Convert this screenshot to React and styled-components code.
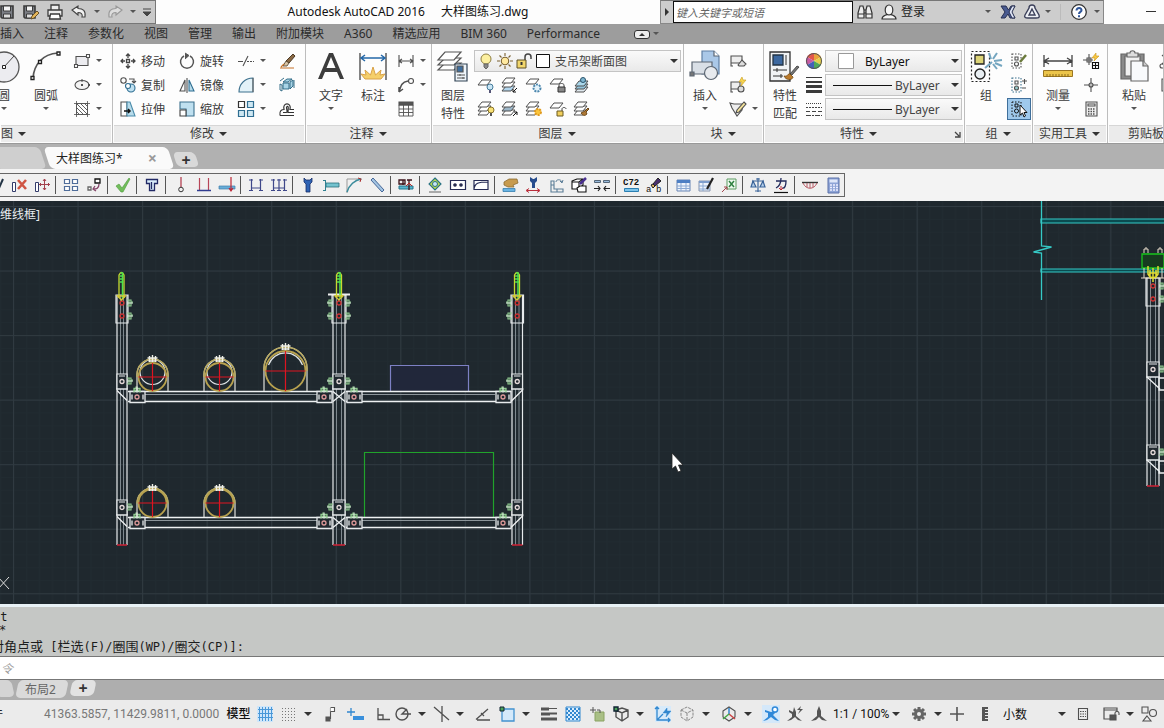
import React from "react";
import styled, { createGlobalStyle, css } from "styled-components";

const Global = createGlobalStyle`
  *, *::before, *::after { box-sizing: border-box; }
  body {
    margin: 0;
    overflow-x: hidden;
    font: 12px/18px "Noto Sans", "Noto Sans CJK SC", sans-serif;
    color: #3a3a3a;
  }
  button, input, select { font: inherit; color: inherit; }
`;

/* ---------- icons ---------- */

const line = { fill: "none", stroke: "#505050", strokeWidth: 1.1 };
const sheet = (y, fill = "#fff", x = 0) => (
  <path d={`M${x + 4} ${y}h9l-4 5H${x}z`} fill={fill} stroke="#505050" />
);
const gearTeeth = [0, 45, 90, 135].map((a) => (
  <path key={a} d="M8 1v14" stroke="#666" strokeWidth="3" transform={`rotate(${a} 8 8)`} />
));

const icons = {
  save: <g fill="none" stroke="#3b3b3b" strokeWidth="1.600"><path d="M2 2h12v12H3l-1-1z" fill="#7c7f86" /><path d="M4.500 2v5h7V2z" fill="#f4f4f4" strokeWidth="1" /><path d="M4.500 14v-4h7v4z" fill="#ddd" strokeWidth="1" /></g>,
  saveAs: <g fill="none" stroke="#3b3b3b" strokeWidth="1.600"><path d="M1 2h11v12H2l-1-1z" fill="#7c7f86" /><path d="M3.500 2v5h6V2z" fill="#f4f4f4" strokeWidth="1" /><path d="M3.500 14v-4h6v4z" fill="#ddd" strokeWidth="1" /><path d="M8 15l1-3 5-5 2 2-5 5z" fill="#e5b65a" stroke="#6b5328" strokeWidth="1" /></g>,
  print: <g fill="#eee" stroke="#3b3b3b" strokeWidth="1.300"><path d="M4 6V1h8v5" /><path d="M1 6h14v6H1z" /><path d="M3.500 10h9l1 5h-11z" fill="#fff" /></g>,
  undo: <path d="M1 6l6-4v2.500c5 0 8 2 7 8.500h-3c1-3-1-4.500-4-4.500V11z" fill="#f1f1f1" stroke="#444" strokeWidth="1.100" />,
  redo: <path d="M15 6L9 2v2.500C4 4.500 1 6.500 2 13h3c-1-3 1-4.500 4-4.500V11z" fill="#ddd" stroke="#999" strokeWidth="1.100" />,
  customize: <path d="M4 5h8M4 8h8l-4 4z" fill="#444" stroke="#444" />,
  binoculars: <g fill="#eee" stroke="#333" strokeWidth="1.200"><path d="M3 2h3l1 4v8H1V9zM13 2h-3L9 6v8h6V9z" /><path d="M7 6h2M7 9h2M1 10h6M9 10h6" /></g>,
  user: <g fill="#f5f5f5" stroke="#333" strokeWidth="1.200"><path d="M1 15c0-3 2-3 5-4.500h4c3 1.500 5 1.500 5 4.500z" /><ellipse cx="8" cy="6" rx="3.800" ry="5" /></g>,
  exchange: <g stroke="#283052" strokeWidth="1"><path d="M1 2h5l2.500 4L11 2h4l-4 6 4 6h-5l-2-4-3 4H1l4-6z" fill="#4a5b91" /><path d="M9 8l3-6h3l-3 6 3 6h-3z" fill="#dfe5f5" /></g>,
  a360: <g fill="#eef0f5" stroke="#3c405a" strokeWidth="1.400"><path d="M8 1c2 0 3 1 3 3l4 7c1 3-1 3-3 3H4c-3 0-4-1-3-3l4-7c0-2 1-3 3-3z" /><path d="M8 5l3 6H5z" /></g>,
  help: <g><circle cx="8" cy="8" r="7.300" fill="#fff" stroke="#333" strokeWidth="1.300" /><path d="M5.500 6.500C5.500 3 11 3.500 10.500 6.500 10.300 8 8 8 8 10M8 11.200v2" fill="none" stroke="#31579a" strokeWidth="2" /></g>,
  minimize: <path d="M3 8.500h10" stroke="#333" />,

  circle: <g><circle cx="16" cy="17" r="15" fill="#ececf0" stroke="#555" strokeWidth="1.300" /><path d="M16 17L26 6" stroke="#444" /><path d="M14.500 15.500h3v3h-3z" fill="#fff" stroke="#222" /></g>,
  arc: <g fill="#fff" stroke="#555" strokeWidth="1.300"><path d="M3 28C4 15 12 4 28 3" fill="none" strokeWidth="1.700" /><path d="M1 26.500h3v3H1zM8.500 10.500h3v3h-3zM27 2h3v3h-3z" stroke="#222" /></g>,
  rect: <g {...line}><path d="M2 3.500h12v9H2z" fill="#ececf0" /><path d="M.5 11.500h3v3h-3zM12.500 1.500h3v3h-3z" fill="#fff" /></g>,
  ellipse: <g {...line}><ellipse cx="8" cy="8" rx="7" ry="4.500" fill="#f4f4f4" /><path d="M7 8h2M8 7v2M7 3.500h2M14 8h2" strokeWidth="2" /></g>,
  hatch: <g {...line}><path d="M2.500 2.500h11v11h-11zM0 2.500h16M0 13.500h16M2.500 0v16M13.500 0v16" strokeWidth=".8" /><path d="M3 3l10 10M7 3l6 6M3 7l6 6M11 3l2 2M3 11l2 2" strokeWidth=".9" /></g>,
  move: <g fill="none" stroke="#444" strokeWidth="1.300"><path d="M6.500 6.500h3v3h-3z" /><path d="M8 1v4M8 11v4M1 8h4M11 8h4M6 3l2-2 2 2M6 13l2 2 2-2M3 6L1 8l2 2M13 6l2 2-2 2" /></g>,
  copy: <g {...line}><circle cx="3.500" cy="3.500" r="2.700" /><path d="M9 2h5v3M12 4l2 2 2-2" /><circle cx="11" cy="11" r="4" fill="#bfe0f0" stroke="#2f6e92" /><circle cx="8" cy="9" r="2.500" fill="#fff" stroke="#2f6e92" /></g>,
  stretch: <g {...line}><path d="M1 1h6v14H1z" /><path d="M7 1h3l5 14H7z" fill="#b7dbea" stroke="#4b8cab" /><path d="M4 10h6M8 8l2 2-2 2" stroke="#111" strokeWidth="1.500" /></g>,
  rotate: <g fill="none" stroke="#555" strokeWidth="1.500"><path d="M11 3a6.500 6.500 0 1 1-6 0" /><path d="M6 0l4 2.500L6 6" fill="#555" strokeWidth="1" /></g>,
  mirror: <g {...line}><path d="M6 3v11H1z" /><path d="M10 3v11h5z" fill="#b7dbea" stroke="#2f6e92" /><path d="M8 1v15" /></g>,
  scale: <g {...line} stroke="#3d718e"><path d="M1 1h14v14H7V8H1z" fill="#bfe0f0" /><path d="M1 9h6v6H1z" fill="#fff" stroke="#444" /></g>,
  trim: <g {...line}><path d="M0 8.500h5M5 13l5-10" /><path d="M9 8.500h7" strokeDasharray="2 1" /></g>,
  fillet: <g {...line} stroke="#3d718e"><path d="M1 15C1 7 7 1 15 1v14z" fill="#e3f2f8" /><path d="M15 1v14" stroke="#666" /></g>,
  array: <g fill="#cfe8f3" stroke="#2f6e92" strokeWidth="1.200"><path d="M.5.5h6v6h-6z" fill="#fff" stroke="#333" /><path d="M9.500.5h6v6h-6zM.5 9.500h6v6h-6zM9.500 9.500h6v6h-6z" /></g>,
  erase: <g><path d="M14 1l2 2-6 7-3-2z" fill="#8b6a45" stroke="#4b3a26" /><path d="M7 8l3 2-2 3H4z" fill="#d8c4a4" stroke="#4b3a26" strokeWidth=".8" /><path d="M1 15h14M2 14l3-3" stroke="#c67026" strokeWidth="1.200" /></g>,
  explode: <g fill="#a9d4e6" stroke="#25627f" strokeWidth=".9"><path d="M4 5l4-3h5L9 5zM4 6h6v6H4zM11 5l3-2v6l-3 3z" /><path d="M1 7l2 1v6l-2-1zM1 4l4-3M15 3v8" fill="none" /></g>,
  offset: <g fill="none" stroke="#333" strokeWidth="1.200"><path d="M1 14.500h14M15 11.500H8.500M1 14.500c-1-5 2-6 4-6C3 1 13 1 11 8.500h4" /><path d="M4 11.500h3c3 0-1-5 1-6s1 3 1 6" /></g>,
  text: <path d="M3 29L14 3h4l11 26h-4l-3-7H10l-3 7zM11.500 18h9L16 7z" fill="#3d3d3d" />,
  dimension: <g fill="none"><path d="M3 3v27M29 3v27" stroke="#444" strokeWidth="1.300" /><path d="M4 8h24M8 5L4 8l4 3M24 5l4 3-4 3" stroke="#2468a8" strokeWidth="1.500" /><path d="M16 17l2.500 8L24 20l-1 5 5-1-4 5H8l-4-5 5 1-1-5 5.500 5z" fill="#f5cf6a" stroke="#d9a248" /></g>,
  linear: <g {...line}><path d="M1 2v12M15 2v12M1 8h14M4 6L1 8l3 2M12 6l3 2-3 2" /></g>,
  leader: <g {...line}><path d="M1 15C3 8 4 5 10 4M1 15l-0-5M1 15l4-3" strokeWidth="1.500" /><circle cx="13" cy="4" r="2.500" /></g>,
  table: <g {...line}><path d="M1 1h14v3H1z" fill="#555" /><path d="M1 4h14v11H1zM1 8h14M1 11.500h14M5.500 4v11M10.500 4v11" strokeWidth=".9" /></g>,
  layers: <g fill="#fff" stroke="#555" strokeWidth="1.200"><path d="M8 13h16l-7 7H1z" /><path d="M8 8h16l-7 7H1z" /><path d="M8 2h16l-7 8H1z" /><path d="M18 14h12v17H18z" fill="#eef5fb" stroke="#345" /><path d="M20 16h6v6h-6z" fill="#3f6f9f" /><path d="M20 25h8M20 28h8M23 24v2M26 27v2" strokeWidth="1" /></g>,
  bulb: <g><circle cx="8" cy="6" r="5" fill="#fcf0a0" stroke="#8f7f42" /><path d="M6 11h4v3l-2 2-2-2z" fill="#888" stroke="#666" /></g>,
  sun: <g fill="#ffe9a0" stroke="#7b6130" strokeWidth="1.100"><circle cx="8" cy="8" r="3.700" /><path d="M8 0v3M8 13v3M0 8h3M13 8h3M2.500 2.500l2 2M11.500 11.500l2 2M13.500 2.500l-2 2M4.500 11.500l-2 2" /></g>,
  unlock: <g><path d="M9 8V4c0-4 6-4 6 0v2" fill="none" stroke="#444" strokeWidth="1.500" /><path d="M1 7h9v8H1z" fill="#f1d66c" stroke="#5e5126" /><path d="M5.500 9v3" stroke="#333" strokeWidth="2" /></g>,
  swatch: <path d="M1.500 1.500h13v13h-13z" fill="#fff" stroke="#111" />,
  grey: <path d="M.5.5h15v15h-15z" fill="#fff" stroke="#999" />,
  layOff: <g>{sheet(3)}<circle cx="12" cy="10" r="3" fill="#c9e6f5" stroke="#457a9a" /><path d="M11 13h2v3h-2z" fill="#557" /></g>,
  layIso: <g>{sheet(9, "#b2d6ee")}{sheet(5)}{sheet(1)}<path d="M15 11l-4 4M11 12v3h3" stroke="#111" fill="none" /></g>,
  layFreeze: <g>{sheet(2)}<circle cx="11" cy="11" r="3.500" fill="#e4f3fb" stroke="#4b86ad" strokeWidth="2" strokeDasharray="2 1" /></g>,
  layLock: <g>{sheet(2)}<path d="M9 10V8c0-2 5-2 5 0v2" fill="none" stroke="#444" /><path d="M8 10h7v5H8z" fill="#888" stroke="#333" /></g>,
  layCurrent: <g>{sheet(10, "#dfe8ee", 1)}{sheet(7, "#92c4dc", 1)}{sheet(4, "#a8d6ea", 1)}<circle cx="9" cy="3" r="2.500" fill="#7fb6d0" stroke="#29536b" /></g>,
  layOn: <g>{sheet(9)}{sheet(5)}{sheet(1)}<circle cx="13" cy="9" r="3" fill="#f8e176" stroke="#8a7428" /><path d="M12 12h2v3h-2z" fill="#555" /></g>,
  layUniso: <g>{sheet(9)}{sheet(5, "#9db7c9")}{sheet(1)}<path d="M11 15l4-4M12 11h3v3" stroke="#111" fill="none" /></g>,
  layThaw: <g>{sheet(9)}{sheet(5)}{sheet(1)}<circle cx="12" cy="11" r="3" fill="#fbc53c" stroke="#e09a1e" strokeWidth="2" strokeDasharray="2 1" /></g>,
  layUnlock: <g>{sheet(2)}<path d="M12 10V8c0-2 4-2 4 0" fill="none" stroke="#444" /><path d="M7 10h6v5H7z" fill="#f1cf5c" stroke="#6b5a22" /></g>,
  layMatch: <g>{sheet(9)}{sheet(5)}{sheet(1)}<path d="M15 8l-3 3 1 2c-2 2-4 2-6-1l4-2 3-3z" fill="#b07a35" stroke="#694516" /></g>,
  insert: <g stroke="#5c6672" strokeWidth="1.200"><path d="M13 1h12l5 5v18H13z" fill="#aac8e8" stroke="#5f7fa3" /><path d="M25 1v5h5" fill="#fff" /><path d="M3 12h20v12H3z" fill="#d9dfe6" /><circle cx="22" cy="23" r="6.500" fill="#e7eaee" /><path d="M1 22h4v4H1z" fill="#777" /></g>,
  blockCreate: <g {...line}><path d="M1 3h11v7H1zM1 10v3h2" fill="#eee" /><path d="M8 12l4-5 4 4-2 2H9z" fill="#ddd" /></g>,
  blockEdit: <g {...line}><path d="M1 5h9v7H1zM1 12v3h2" fill="#eee" /><circle cx="11" cy="12" r="3" fill="#ddd" /><path d="M12 0L9 5h3l-1 4 5-6h-3z" fill="#f7d550" stroke="#c79c1d" strokeWidth=".6" /></g>,
  blockAttr: <g {...line}><path d="M0 2l4 1 9 0-1 6-5 6-5-8z" fill="#eee" /><path d="M14 1l2 2-7 8-3 1 1-3z" fill="#f5e39a" /></g>,
  matchProps: <g stroke="#333" strokeWidth="1.300"><path d="M1 2h20v29H1z" fill="#f1f3f5" /><path d="M4 5h10v10H4z" fill="#3c68a0" stroke="#234" /><path d="M17 5v10M4 20h14M8 18v4M4 26h10M12 24v4" strokeWidth="1" /><path d="M30 17l-7 8-2-1 7-8z" fill="#777" strokeWidth=".8" /><path d="M15 26c4 1 4-3 6-2l3 3c0 3-7 4-9-1z" fill="#bb7b2c" stroke="#704612" strokeWidth=".8" /></g>,
  colors: <g><path d="M8 8V0a8 8 0 0 1 7 4z" fill="#e9a33c" /><path d="M8 8V0a8 8 0 0 0-7 4z" fill="#e2574c" /><path d="M8 8l7-4a8 8 0 0 1 0 8z" fill="#e6cf4a" /><path d="M8 8L1 4a8 8 0 0 0 0 8z" fill="#c75aa3" /><path d="M8 8l7 4a8 8 0 0 1-7 4z" fill="#4fa85a" /><path d="M8 8l-7 4a8 8 0 0 0 7 4z" fill="#4560b8" /><circle cx="8" cy="8" r="7.500" fill="none" stroke="#555" /></g>,
  weights: <g fill="#3b3b3b"><path d="M0 0h16v1H0zM0 4h16v2H0zM0 8h16v3H0zM0 13h16v3H0z" /></g>,
  linetypes: <g stroke="#444" fill="none"><path d="M0 2.500h16" strokeDasharray="1 1" /><path d="M0 6.500h16" strokeDasharray="2 1" /><path d="M0 10.500h16" strokeDasharray="4 2" /><path d="M0 14.500h16" strokeDasharray="5 1 2 1" /></g>,
  group: <g fill="none" stroke="#222"><path d="M1.500 1.500h18v30h-18z" strokeDasharray="2 2" strokeWidth="1.200" /><path d="M5 5h9v9H5z" fill="#ddd477" strokeWidth="1.300" /><circle cx="10" cy="24" r="5" fill="#e8eef2" strokeWidth="1.400" /><path d="M22 12l-7 6M23 14l4 5M21 9l-2-6M24 11l8-1M23 9l4-6M25 13l7 3" stroke="#74a6c0" strokeWidth="2" /></g>,
  ungroup: <g {...line}><path d="M1 1h9v14H1z" strokeDasharray="1.500 1.500" /><path d="M4 4h3v3H4z" /><circle cx="5.500" cy="11" r="2" /><path d="M15 2l-6 7" stroke="#6b7a3c" strokeWidth="2.500" /></g>,
  groupEdit: <g {...line}><path d="M1 1h9v14H1z" strokeDasharray="1.500 1.500" stroke="#3f7390" /><path d="M4 4h3v3H4z" /><circle cx="5.500" cy="11" r="2" fill="#9cc" /><path d="M11 4h5M13.500 2v5M11 11h4" /></g>,
  groupSelect: <g {...line} stroke="#111" strokeWidth="1"><path d="M1 1h9v14H1z" strokeDasharray="1.500 1.500" /><path d="M4 3h3v3H4z" /><circle cx="5.500" cy="10" r="2" /><path d="M9 4v10l2.500-2 1.500 4 1.500-1-1.500-3.500h3z" fill="#fff" /></g>,
  measure: <g><path d="M2 5v12M30 5v12M2 11h28M7 8l-5 3 5 3M25 8l5 3-5 3" fill="none" stroke="#444" strokeWidth="1.300" /><path d="M1.500 20.500h29v6h-29z" fill="#ecc54b" stroke="#9b7621" /><path d="M5 24v3M8 24v3M11 24v3M14 24v3M17 24v3M20 24v3M23 24v3M26 24v3" stroke="#8b6a1b" /></g>,
  quickSelect: <g {...line}><path d="M0 7h10M6 1v11M4 5h4v4H4z" /><path d="M13 0l-4 5h3l-1 3 5-5h-3z" fill="#f7c843" stroke="#c9961d" strokeWidth=".6" /><path d="M9.500 9.500h6v6h-6zM9 12.500h6M12.500 10v6" stroke="#111" /></g>,
  idPoint: <g {...line}><path d="M1 8h14M8 1v14" /><circle cx="8" cy="8" r="2" fill="#bbb" /></g>,
  calculator: <g {...line}><path d="M3 1h11v14H3zM5 3h7v2H5z" fill="#f1f1f1" /><path d="M5 8h7M5 10.500h7M5 13h7" strokeDasharray="1.500 1" strokeWidth="1.500" /></g>,
  paste: <g stroke="#666" strokeWidth="1.200"><path d="M3 4h23v25H3z" fill="#8a8a8a" /><path d="M7 6h15v20H7z" fill="#f1f1f1" /><path d="M9 3h3c0-3 5-3 5 0h3v4H9z" fill="#ddd" /><path d="M13 11h12l5 5v15H13z" fill="#f8fafc" /><path d="M25 11v5h5" fill="#ccc" /></g>,
  cut: <g {...line}><path d="M2 2l9 9M11 2l-9 9" /><circle cx="2" cy="13" r="2" /></g>,
  copyClip: <g {...line}><path d="M2 2h9v12H2z" fill="#eee" /></g>,

  check: <path d="M1 9l3-2 3 4 7-10 1 1-7 13H6z" fill="#71bd5b" stroke="#4e9a3c" strokeWidth=".6" />,
  edit: <path d="M15 2l-4 9" stroke="#234" strokeWidth="2" fill="none" />,
  delCol: <g><path d="M1.500 5.500h3v9h-3z" fill="#fff" stroke="#333c6b" /><path d="M7 3l8 9M15 3l-8 9" stroke="#cf5543" strokeWidth="2.600" /></g>,
  moveCol: <g><path d="M1.500 5.500h3v9h-3z" fill="#fff" stroke="#333c6b" /><path d="M10.500 2v11M5 7.500h11M9 4l1.500-2L12 4M9 11l1.500 2 1.500-2M7 6L5.500 7.500 7 9M14 6l1.500 1.500L14 9" fill="none" stroke="#a3404c" /></g>,
  quad: <g fill="#fff" stroke="#4f6d9a"><path d="M1.500 2.500h5v4h-5zM9.500 2.500h5v4h-5zM1.500 9.500h5v4h-5zM9.500 9.500h5v4h-5z" strokeWidth="1.200" /></g>,
  swap: <g fill="#fff" stroke="#111" strokeWidth="1.300"><path d="M9 2h5v4H9z" /><path d="M2 10h3v3H2z" stroke="#666" /><path d="M13 7c0 5-3 5-6 5M9 9l-2 3 3 2" fill="none" stroke="#84456a" /></g>,
  tee: <path d="M2.500 2.500h11v4h-3v7h-5v-7h-3zM7.500 5v7" fill="#d9edfb" stroke="#222a66" strokeWidth="1.300" />,
  pendulum: <g fill="none"><path d="M8 0v10" stroke="#b03345" strokeWidth="1.200" /><circle cx="8" cy="12.500" r="2.300" stroke="#333" /></g>,
  goal: <g fill="none"><path d="M3.500 1v12M12.500 1v12" stroke="#b84558" strokeWidth="1.200" /><path d="M1 13.500h14" stroke="#313d90" strokeWidth="1.500" /></g>,
  railDown: <g><path d="M0 9h16v3H0z" fill="#67acd8" stroke="#3f7fae" strokeWidth=".7" /><path d="M12 0v14M10 11l2 3 2-3" stroke="#bd2634" strokeWidth="1.200" fill="none" /></g>,
  bay2: <path d="M3.500 2v12M12.500 2v12M3 11h10M1 3h4M11 3h4M1 13.500h4M11 13.500h4" stroke="#3f488a" strokeWidth="1.200" fill="none" />,
  bay3: <path d="M2.500 2v12M8 2v12M13.500 2v12M2 11h12M0 3h4M6 3h4M12 3h4M0 13.500h4M6 13.500h4M12 13.500h4" stroke="#3f488a" strokeWidth="1.200" fill="none" />,
  bolt: <path d="M4 1l2 2h4l2-2v4l-2 2v8H6V7L4 5z" fill="#2e63b4" stroke="#162f68" strokeWidth=".8" />,
  railSide: <g><path d="M3 6h13v4H3z" fill="#74c3cf" stroke="#28707c" strokeWidth=".8" /><path d="M2.500 3v11M0 3.500h3M0 13.500h3" stroke="#2f8090" /></g>,
  braceDown: <g fill="none"><path d="M1 2v14M1 2h15" stroke="#999" /><path d="M1 15C3 8 9 3 15 2" stroke="#3b8c9c" strokeWidth="1.600" /><path d="M12 1l3 1-1 3" stroke="#a33" /></g>,
  diagonal: <path d="M2 3l2-2 11 12-2 2z" fill="#a3c4e2" stroke="#456798" />,
  assembly: <g><path d="M1 9h14v3H1z" fill="#58b3cd" stroke="#23768c" /><path d="M1 3h6v4H1zM9 3h5M11 3v10M5 3v5" fill="none" stroke="#3b1118" strokeWidth="1.300" /><path d="M11 6l3 3M11 6l-3 3" stroke="#b22" /></g>,
  target: <g><path d="M8 1l6 6-6 6-6-6z" fill="#b8d94d" stroke="#267083" strokeWidth="1.100" /><circle cx="8" cy="7" r="2.500" fill="#c8e6f5" stroke="#267083" /><path d="M2 14h12v2H2z" fill="#aaa" /></g>,
  plate: <g fill="#fff" stroke="#252a54" strokeWidth="1.200"><path d="M.5 3.500h15v9H.5z" /><circle cx="5" cy="8" r="1.200" fill="#333" /><circle cx="11" cy="8" r="1.200" fill="#333" /></g>,
  curvePlate: <path d="M1 3.500h14v9H1zM1 12c1-6 4-7 14-7" fill="#fff" stroke="#252a54" strokeWidth="1.200" />,
  hand: <g><path d="M2 5l5-3h8l1 4-5 2 1 2H6L2 8z" fill="#c79b4f" stroke="#8b6c34" strokeWidth=".8" /><path d="M1 11.500h12v3H1z" fill="#69b4e4" stroke="#367fae" strokeWidth=".8" /></g>,
  boltWidth: <g><path d="M5 0v4l2 2v5h3V6l2-2V0L9 2H8z" fill="#264c8d" /><path d="M2 13.500h12M4 11.500l-3 2 3 2M12 11.500l3 2-3 2" stroke="#ba2e3b" fill="none" /></g>,
  elbow: <g fill="none" stroke="#5a7c96"><path d="M3 4h3v8h9v3H3zM3 8h3M9 12v3" strokeWidth="1.100" /><path d="M8 5c0-3 5-3 6 0M12 4l2 2 1-3" /></g>,
  boxes: <g fill="#fff" stroke="#111" strokeWidth="1.100"><path d="M1 4l5-2h6v6l-4 4H1zM1 5h7v7M8 5l4-3" /><path d="M6 11l3-2h6v6H7z" /><path d="M15 1L9 7" stroke="#4a3090" strokeWidth="2.500" /></g>,
  joinRails: <g fill="none" stroke="#222"><path d="M.5 3.500h6v2h-6zM9.500 3.500h6v2h-6z" fill="#9bd" stroke="#567" /><path d="M0 11.500h6M4 9l2 2.500L4 14M16 11.500h-6M12 9l-2 2.500 2 2.500" strokeWidth="1.200" /></g>,
  eraser: <g><path d="M12 1l3 3-6 5-2-2z" fill="#493071" stroke="#222" /><path d="M5 8l2-1 2 2-2 2z" fill="#e3b45d" stroke="#222" /><text x="0" y="15" fontSize="9" fontFamily="Liberation Mono" fill="#111">a</text><text x="10" y="15" fontSize="9" fontFamily="Liberation Mono" fill="#111">b</text></g>,
  c72: <g><text x="0" y="8" fontSize="9" fontFamily="Liberation Mono" fontWeight="700" fill="#111">C72</text><path d="M1.500 11.500h14v3h-14z" fill="#7cc3ea" stroke="#2b7fb2" /></g>,
  grid: <g><path d="M2 3h13v11H2z" fill="#eef4fc" stroke="#6783b3" /><path d="M2 3h13v3H2z" fill="#4d7fc4" /><path d="M2 9h13M2 11.500h13M6 6v8M11 6v8" stroke="#8aa9d4" /></g>,
  gridEdit: <g><path d="M1 4h11v10H1z" fill="#eef4fc" stroke="#8594ae" /><path d="M1 4h11v2H1z" fill="#7d9dcc" /><path d="M1 9h11M1 12h11M5 6v8" stroke="#8aa9d4" /><path d="M15 1L9 12" stroke="#222" strokeWidth="2.200" /></g>,
  excel: <g><path d="M6 2h9v10H6z" fill="#eef8ee" stroke="#5d9c62" /><path d="M8 4l5 6M13 4l-5 6" stroke="#2f8040" strokeWidth="1.500" /><path d="M1 15l5-5M3 10h3v3" fill="none" stroke="#a2454c" /></g>,
  balance: <path d="M8 1v14M2 4h12M3 4L1 10h5zM13 4l-3 6h5zM5 14h6M6 2h4" fill="#b5cfea" stroke="#3b6499" strokeWidth="1.200" />,
  force: <g fill="none"><path d="M3 4h10c0 4-1 8-4 7M8 1c0 4-1 8-5 10" stroke="#222a5c" strokeWidth="1.300" /><path d="M8 9v4M6 11l2 2 2-2" stroke="#ba2633" /><path d="M1 15.500h14" stroke="#111" strokeWidth="1.200" /></g>,
  beam: <g fill="none"><path d="M0 5.500h16" stroke="#333" strokeWidth="1.400" /><path d="M1 6c3 7 11 7 14 0M5 6v4M8 6v5M11 6v4" stroke="#b34a55" strokeWidth=".9" /></g>,
  calc: <g><path d="M3 1h11v15H3z" fill="#8ea4d6" stroke="#5a70a8" /><path d="M4.500 2.500h8v3h-8z" fill="#dfe7f8" /><path d="M5 8h8M5 10.500h8M5 13h8" stroke="#eef" strokeWidth="1.500" strokeDasharray="2 1" /></g>,

  gridOn: <g><path d="M0 0h16v16H0z" fill="#cfe6fa" /><path d="M2.500 1v14M5.500 1v14M8.500 1v14M11.500 1v14M14.500 1v14M1 3.500h15M1 7.500h15M1 11.500h15" stroke="#4a98d8" strokeWidth="1" /></g>,
  dots: <path d="M1 2.500h14M1 5.500h14M1 8.500h14M1 11.500h14M1 14.500h14" stroke="#777" strokeDasharray="1 2" />,
  infer: <g {...line} stroke="#555"><path d="M7.500 13V2" /><path d="M7.500 1.500h4v4h-4" fill="#fff" /><path d="M3 11h4v4H3z" fill="#555" /></g>,
  dynInput: <g><path d="M4 2v8M0 6h8" stroke="#3187cf" strokeWidth="1.300" /><path d="M6 10h11v4H6z" fill="#3a90dc" /></g>,
  ortho: <g {...line} strokeWidth="1.300"><path d="M3 2v11.500h12M3 9h5v5" /></g>,
  polar: <g {...line} strokeWidth="1.400"><circle cx="7" cy="8" r="6" /><path d="M16 8H7l5-5" /></g>,
  isodraft: <g {...line} strokeWidth="1.300"><path d="M1 1l15 13M9 0v16" /></g>,
  otrack: <g {...line} strokeWidth="1.300"><path d="M1 13.500L13 3M2 14h13" /><path d="M6 7l3 3" /></g>,
  osnap: <g><path d="M3 3h12v12H3z" fill="#d4e9fa" stroke="#4292d0" strokeWidth="1.300" /><path d="M1 1h4v4H1z" fill="#4ba35a" stroke="#123" /></g>,
  lwt: <g stroke="#555"><path d="M0 3h8M0 8h9" strokeWidth="3" /><path d="M8 2.500h8" /><path d="M9 7.500h7" strokeWidth="2" /><path d="M0 13h16" strokeWidth="3" /></g>,
  transparency: <g><path d="M1 1h14v14H1z" fill="#dceefc" stroke="#3187cf" /><path d="M1 3h14M1 7h14M1 11h14" stroke="#3187cf" strokeWidth="2" strokeDasharray="2 2" /><path d="M3 5h12M3 9h12M3 13h12" stroke="#3187cf" strokeWidth="2" strokeDasharray="2 2" /></g>,
  cycling: <g><path d="M6 6h9v9H6z" fill="#a9bf86" stroke="#8aa363" /><path d="M4 1v6M1 4h6M8 4h3v3" fill="none" stroke="#555" /></g>,
  cube: <g {...line} strokeWidth="1.400"><path d="M3 4l6-2 6 2v7l-6 4-6-4zM3 4l6 3 6-3M9 7v8" /><path d="M1 1h4v4H1z" fill="#4ba35a" stroke="#123" /></g>,
  ducs: <g fill="none" stroke="#3187cf" strokeWidth="1.300"><path d="M0 0h16v16H0z" fill="#d7eafa" stroke="none" /><path d="M2 1v13h13M0 3l2-2 2 2M13 12l2 2-2 2M2 14L8 8" /><path d="M12 2L8 7h4l-1 4 5-6h-4z" fill="#3187cf" strokeWidth=".5" /></g>,
  filter: <g fill="none" stroke="#888"><path d="M2 4l6-3 6 3v7l-6 4-6-4zM2 4l6 3 6-3M8 7v8" strokeDasharray="3 1" /></g>,
  gizmo: <g {...line}><path d="M2 5l6-4 6 4v6l-6 4-6-4z" /><path d="M8 8V2" stroke="#3187cf" strokeWidth="1.500" /><path d="M8 8l6 5" stroke="#c44" strokeWidth="1.500" /><path d="M8 8l-6 5" stroke="#4a4" strokeWidth="1.500" /></g>,
  annoVis: <g><path d="M-1 -1h18v18H-1z" fill="#d4e8fa" /><path d="M0 15l5-4V7l-3-1V4l6 2 4-1 1 1-3 3 6 6-4-1-4-3-4 3z" fill="#2f88d8" /><circle cx="12" cy="3.500" r="2.600" fill="#fff" stroke="#2f88d8" strokeWidth="1.500" /></g>,
  annoAuto: <g fill="#555"><path d="M0 15l5-4V8L2 6V4l4 2 1-5 2 5v4l6 5-4-1-3-3-4 3z" /><path d="M14 0l-4 4h3l-2 4 5-5h-3z" /></g>,
  annoScale: <path d="M0 15l6-5V5l2-5 2 5v5l6 5-5-1-3-3-3 3z" fill="#555" />,
  gear: <g>{gearTeeth}<circle cx="8" cy="8" r="5" fill="#666" /><circle cx="8" cy="8" r="2" fill="#eee" /></g>,
  plus: <path d="M8 1v14M1 8h14" stroke="#555" strokeWidth="1.600" />,
  ruler: <path d="M5 1h6v2H8v1h3v2H8v1h3v2H8v1h3v2H8v1h3v2H5z" fill="#555" />,
  panel: <g {...line}><path d="M3.500 2.500h9v11h-9z" /><path d="M5 5.500h6M5 8h6M5 10.500h6" strokeDasharray="1.500 1" /></g>,
  lockUi: <g {...line}><path d="M8 13H1V2h13v4M1 4h13" strokeWidth="1.200" /><path d="M7 9h6v5H7z" fill="#555" /><path d="M12 9V7c0-2 4-2 4 0v2" /></g>,
  isolate: <g {...line}><path d="M1 1h6v6H1z" /><circle cx="12" cy="7" r="3.500" /><path d="M6 10l4 5H2z" /></g>,
};

const Svg = styled.svg`
  display: block;
  flex: none;
  overflow: visible;
`;
const Icon = ({ name, size = 16 }) => (
  <Svg width={size} height={size} viewBox={size > 16 ? "0 0 32 32" : "0 0 16 16"} aria-hidden="true">
    {icons[name]}
  </Svg>
);

const Caret = styled.i`
  display: block;
  flex: none;
  width: ${(p) => p.$w || 18}px;
  height: 8px;
  &::before {
    content: "";
    display: block;
    width: 0;
    margin: 2px auto;
    border: ${(p) => (p.$big ? 4 : 3)}px solid transparent;
    border-top-color: ${(p) => (p.$big ? "#333" : "#555")};
    border-bottom: 0;
    transform: rotate(${(p) => (p.$right ? -90 : 0)}deg);
  }
`;

/* ---------- shared pieces ---------- */

const bare = css`
  border: 0;
  padding: 0;
  margin: 0;
  background: none;
`;
const Page = styled.div`
  display: flex;
  flex-direction: column;
  min-height: 100vh;
  overflow: hidden;
`;

/* ---------- title bar ---------- */

const TitleBar = styled.header`
  display: flex;
  height: 24px;
  background: #fdfdfd;
`;
const QuickAccess = styled.div`
  display: flex;
  align-items: center;
  width: 156px;
  padding-right: 4px;
  background: #c9c9c9;
  border: solid #777;
  border-width: 1px 1px 1px 0;
  & > :first-child { margin-left: -5px; }
`;
const BarButton = styled.button`
  ${bare}
  display: flex;
  align-items: center;
  justify-content: center;
  flex: none;
  height: 22px;
  width: ${(p) => p.$w || 24}px;
`;
const Caption = styled.h1`
  display: flex;
  flex: 1;
  justify-content: center;
  gap: 16px;
  margin: 0;
  font-size: 12px;
  font-weight: 400;
  line-height: 24px;
  color: #111;
  white-space: nowrap;
`;
const InfoCenter = styled.div`
  display: flex;
  align-items: center;
  width: 444px;
  background: #cdcdcd;
  border: 1px solid #888;
  border-top-color: #777;
`;
const SearchInput = styled.input`
  width: 180px;
  height: 22px;
  padding: 0 2px;
  border: 1px solid #111;
  border-radius: 0;
  background: #fff;
  font-size: 11px;
  &::placeholder { color: #666; font-style: italic; opacity: 1; }
`;
const SignIn = styled.button`
  ${bare}
  display: flex;
  align-items: center;
  flex: 1;
  white-space: nowrap;
  color: #222;
  & > i { margin-left: auto; }
`;
const Divider = styled.span`
  width: 1px;
  height: 16px;
  margin: 0 6px;
  background: #bbb;
`;
const WindowControls = styled.div`
  width: 60px;
  padding-left: 35px;
`;

/* ---------- ribbon ---------- */

const TabList = styled.nav`
  display: flex;
  align-items: center;
  gap: 20px;
  height: 20px;
  background: #9d9d9d;
`;
const Tab = styled.a`
  flex: none;
  line-height: 22px;
  color: #2b2b2b;
  text-decoration: none;
`;
const CollapseButton = styled.button`
  ${bare}
  display: flex;
  align-items: center;
  margin-left: 14px;
`;
const CollapsePill = styled.span`
  display: flex;
  justify-content: center;
  align-items: center;
  width: 16px;
  height: 9px;
  border: 1px solid #333;
  border-radius: 3px;
  background: #eee;
  &::before {
    content: "";
    border: 3px solid transparent;
    border-bottom-color: #333;
    border-top: 0;
  }
`;
const Ribbon = styled.div`
  display: flex;
  height: 100px;
  background: #fdfdfd;
  border-bottom: 1px solid #999;
`;
const Panel = styled.section`
  display: flex;
  flex-direction: column;
  flex: ${(p) => (p.$w ? `0 0 ${p.$w}px` : "1 0 0")};
  min-width: 0;
  border-right: 1px solid #bdbdbd;
  overflow: hidden;
`;
const PanelBody = styled.div`
  display: flex;
  flex: 1;
  padding: 5px 2px 0 ${(p) => p.$pad || 0}px;
`;
const PanelTitle = styled.h2`
  display: flex;
  align-items: center;
  justify-content: ${(p) => (p.$start === undefined ? "center" : "flex-start")};
  padding-left: ${(p) => (p.$start === undefined ? 4 : p.$start)}px;
  height: 17px;
  margin: 0 1px 1px;
  background: #ebebeb;
  border-top: 1px solid #d6d6d6;
  font-size: 12px;
  font-weight: 400;
  white-space: nowrap;
  & > svg { margin-left: auto; }
`;
const Spring = styled.span`
  flex: 1;
`;
const BigButton = styled.button`
  ${bare}
  display: flex;
  flex-direction: column;
  align-items: center;
  flex: none;
  width: ${(p) => p.$w || 42}px;
  margin-left: ${(p) => (p.$clipped ? -14 : 0)}px;
  padding-top: 1px;
  line-height: 18px;
  & > svg { margin-bottom: 5px; }
`;
const ToolGrid = styled.div`
  display: grid;
  grid-template-columns: ${(p) => p.$cols || "auto"};
  grid-auto-rows: 24px;
  align-content: start;
  justify-content: start;
  flex: none;
  margin-left: ${(p) => (p.$spaced ? 4 : 0)}px;
`;
const ToolButton = styled.button`
  ${bare}
  display: flex;
  align-items: center;
  justify-content: ${(p) => (p.$wide ? "center" : "flex-start")};
  width: ${(p) => (p.$wide ? "24px" : "auto")};
  height: ${(p) => (p.$active ? 22 : 24)}px;
  align-self: center;
  white-space: nowrap;
  ${(p) => p.$active && css`
    background: #9fc9ec;
    outline: 1px solid #3f6f9b;
    outline-offset: -1px;
  `}
`;
const ToolLabel = styled.span`
  margin-left: 5px;
  padding-top: 2px;
`;
const LayerColumn = styled.div`
  flex: 1;
  min-width: 0;
`;
const Field = styled.label`
  display: flex;
  align-items: center;
  height: 22px;
  margin: 1px 0;
  padding-left: ${(p) => p.$pad || 3}px;
  border: 1px solid #c4c4c4;
  background: linear-gradient(#fafafa, #e9e9e9);
  position: relative;
  & > i { position: absolute; right: 0; pointer-events: none; }
`;
const FieldIcons = styled.span`
  display: flex;
  gap: 3px;
`;
const Select = styled.select`
  ${bare}
  appearance: none;
  flex: 1;
  min-width: 0;
  height: 20px;
  padding-left: ${(p) => p.$pad || 0}px;
  padding-top: 1px;
  color: ${(p) => (p.$strong ? "#111" : "#444")};
`;
const LineSample = styled.span`
  flex: none;
  width: 59px;
  height: 1px;
  margin-right: 3px;
  background: #111;
`;
const FieldStack = styled.div`
  flex: 1;
  display: flex;
  flex-direction: column;
  margin-left: 3px;
`;

const Small = ({ icon, label, caret, wide, active }) => (
  <ToolButton type="button" $wide={wide} $active={active} aria-label={label ? undefined : icon}>
    <Icon name={icon} />
    {label && <ToolLabel>{label}</ToolLabel>}
    {caret && <Caret />}
  </ToolButton>
);
const Big = ({ icon, lines, caret, w, clipped }) => (
  <BigButton type="button" $w={w} $clipped={clipped}>
    <Icon name={icon} size={32} />
    {lines.map((l) => <span key={l}>{l}</span>)}
    {caret && <Caret />}
  </BigButton>
);

/* ---------- file tabs and tool strip ---------- */

const FileTabs = styled.nav`
  display: flex;
  align-items: flex-end;
  height: 25px;
  background: #b1b1b1;
`;
const FileTab = styled.div`
  position: relative;
  isolation: isolate;
  display: flex;
  align-items: center;
  flex: none;
  width: ${(p) => p.$w}px;
  height: ${(p) => p.$h || 22}px;
  padding-left: ${(p) => p.$pad || 0}px;
  margin-left: ${(p) => p.$gap || 0}px;
  margin-bottom: ${(p) => p.$lift || 0}px;
  color: #222;
  &::before {
    content: "";
    position: absolute;
    inset: 0 ${(p) => (p.$tight ? 1 : 3)}px;
    z-index: -1;
    background: ${(p) => p.$bg || "#fafafa"};
    border-radius: 5px;
    transform: skewX(${(p) => p.$skew || 0}deg);
  }
`;
const TabLink = styled.a`
  padding-top: 1px;
  color: ${(p) => (p.$dim ? "#666" : "#222")};
  text-decoration: none;
  white-space: nowrap;
`;
const CloseButton = styled.button`
  ${bare}
  margin-left: auto;
  margin-right: 15px;
  color: #999;
  font-size: 16px;
  font-weight: 700;
  line-height: 18px;
`;
const AddButton = styled.button`
  ${bare}
  width: 100%;
  color: #333;
  font-size: 16px;
  font-weight: 700;
  line-height: 14px;
`;
const StripHolder = styled.div`
  display: flex;
  height: 32px;
  padding: 4px 0;
  background: #f3f3f3;
`;
const Strip = styled.div`
  display: flex;
  align-items: center;
  height: 24px;
  border: solid #666;
  border-width: 1px 1px 1px 0;
  background: #f0f0f0;
  & > :first-child { margin-left: -16px; }
`;
const StripButton = styled.button`
  ${bare}
  display: grid;
  place-items: center;
  flex: none;
  width: 23px;
  height: 22px;
`;
const StripRule = styled.span`
  flex: none;
  width: 2px;
  height: 18px;
  margin: 0 2px;
  background: #555;
  border-right: 1px solid #f0f0f0;
`;

/* ---------- drawing area ---------- */

const Canvas = styled.main`
  position: relative;
  flex: 1 0 403px;
  overflow: hidden;
  background: #1f282e;
  & > svg { position: absolute; inset: 0; width: 100%; height: 100%; }
`;
const ViewLabel = styled.span`
  position: relative;
  z-index: 1;
  display: block;
  padding-top: 5px;
  color: #e8ecee;
`;

const Nut = ({ x, y, flip }) => (
  <g transform={`translate(${x} ${y})${flip ? " rotate(-90)" : ""}`} fill="none">
    <path d="M-1 -3h4v6h-4M3 -1h2M1 -3v6" stroke="#8fc98f" />
    <path d="M-1 0h6" stroke="#cfe8cf" />
  </g>
);
const Hole = ({ x, y, color = "#d99" }) => <circle cx={x} cy={y} r="2" fill="none" stroke={color} strokeWidth="1.300" />;

const Column = ({ x, w, top = 295, bottom = 545, sides, brackets = [374, 500] }) => {
  const c = x + w / 2;
  return (
    <g fill="none" stroke="#e6eaec" strokeWidth="1.200">
      <path d={`M${x} ${top}V${bottom}M${x + w} ${top}V${bottom}`} />
      <path d={`M${x + 3.5} ${top}V${bottom}M${x + w - 3.5} ${top}V${bottom}`} stroke="#7f898f" strokeWidth="1" />
      <path d={`M${x - 1} ${top}h${w + 2}v28h-${w + 2}z`} />
      <Hole x={c} y={top + 8} color="#c33" />
      <Hole x={c} y={top + 21} color="#c33" />
      {brackets.map((b) => (
        <g key={b}>
          <path d={`M${x} ${b}h${w}v15h-${w}z`} fill="#20292f" />
          <path d={`M${x + 2} ${b + 2}h${w - 4}M${x - 1} ${b + 15}h${w + 2}`} />
          <Hole x={c} y={b + 7.500} color="#e8dcdc" />
        </g>
      ))}
      {sides.map((s) => (
        <g key={s} transform={s < 0 ? `translate(${2 * c} 0) scale(-1 1)` : undefined}>
          {[top + 8, top + 21, ...brackets.map((b) => b + 7)].map((y) => <Nut key={y} x={x + w + 1} y={y} />)}
        </g>
      ))}
      <path d={`M${x} ${bottom}h${w}`} stroke="#d02034" strokeWidth="1.500" />
    </g>
  );
};
const Hanger = ({ x }) => (
  <g fill="none" strokeWidth="1.300">
    <path d={`M${x - 2.500} 298V275q2.500 -5 5 0V298`} stroke="#c9d930" />
    <path d={`M${x - 1} 273h2v26M${x - 2} 276h4M${x - 2} 279h4M${x - 2} 282h4`} stroke="#4de04d" strokeWidth="1.500" />
    <path d={`M${x - 4} 296l4 4 4-4z`} stroke="#d6c936" />
  </g>
);
const Clamp = ({ x, y }) => (
  <g fill="none" stroke="#e6eaec">
    <path d={`M${x - 7} ${y}h15v11h-15z`} fill="#20292f" />
    <path d={`M${x - 5} ${y + 3}v5M${x + 6} ${y + 3}v5`} />
    <Hole x={x} y={y + 5.500} />
    <Nut x={x} y={y} flip />
  </g>
);
const Beam = ({ y }) => (
  <g fill="none" stroke="#eef1f2" strokeWidth="1.300">
    <path d={`M128 ${y}H332M128 ${y + 10}H332M346 ${y}H511M346 ${y + 10}H511`} />
    <path d={`M145 ${y + 3}H317M361 ${y + 3}H495`} stroke="#8d969b" strokeWidth="1" />
    <path d={`M117 ${y - 1}l10 10M523 ${y - 2}l-12 12M333 ${y}l12 10M345 ${y}l-12 10`} />
    {[137, 324, 354, 503].map((x) => <Clamp key={x} x={x} y={y} />)}
  </g>
);
const Pipe = ({ x, y, r, base, inner }) => {
  const o = r + 1.500;
  const top = base - 2 * r - (inner ? 4 : 1);
  return (
    <g fill="none">
      <path d={`M${x - o} ${base}V${top + o}a${o} ${o} 0 0 1 ${2 * o} 0V${base}`} stroke="#dfe2dc" strokeWidth="1.200" />
      {inner > 2 && <circle cx={x} cy={y - inner} r={r - 1.500} stroke="#dfe4e6" strokeWidth="1.200" />}
      {inner <= 2 && <path d={`M${x - r + 3} ${y - 6}a${r - 2} ${r - 2} 0 0 1 ${2 * r - 6} 0`} stroke="#dfe4e6" strokeWidth="1.200" />}
      <path d={`M${x - o} ${y}V${top + o}a${o} ${o} 0 0 1 ${2 * o} 0V${y}`} stroke="#b9a95e" strokeWidth="1.500" />
      <circle cx={x} cy={y} r={r} stroke="#b8a24f" strokeWidth="1.800" />
      <path d={`M${x - r} ${y}h${2 * r}M${x} ${y - r}v${2 * r}`} stroke="#dd1420" strokeWidth="1.200" />
      <path d={`M${x - 5} ${top - 1}h10M${x - 4} ${top + 2}h8M${x - 3} ${top - 3}v6M${x} ${top - 4}v7M${x + 3} ${top - 3}v6`} stroke="#f0f0e6" strokeWidth="1.400" />
    </g>
  );
};
const SideFrame = () => (
  <g fill="none">
    <path d="M1041 219H4000V223H1041zM1041 269H4000V272H1041z" fill="#0b4b50" stroke="#35c9c6" strokeWidth="1.200" />
    <path d="M1041.500 201v45l10 1-18 5 8 1v47" stroke="#35c9c6" strokeWidth="1.300" />
    <g transform="translate(1147 0)">
      <Column x={0} w={12} top={278} bottom={486} sides={[1]} brackets={[362, 445]} />
      {[377, 460].map((y) => <path key={y} d={`M0 ${y}l13 12M12 ${y + 1}h9v12h-9z`} stroke="#eef1f2" strokeWidth="1.300" />)}
      <path d="M-5 254h22v14h-22z" fill="#173b20" stroke="#18c51c" strokeWidth="1.300" />
      <path d="M-3 253v-4h4v4M-2 248h2M11 253v-4h4v4M12 248h2M-6 278h24M-3 268v10M15 268v10" stroke="#e8dccb" />
      <path d="M1 266v8q5 8 10 0v-8M3 270v8M9 270v8M2 273h8M6 268v14" stroke="#e0dc35" strokeWidth="1.500" />
    </g>
  </g>
);

const Drawing = () => (
  <svg aria-hidden="true">
    <defs>
      <pattern id="minor" x="13" y="5" width="12.900" height="12.900" patternUnits="userSpaceOnUse">
        <path d="M.5 0V13M0 .5H13" stroke="#212b31" fill="none" />
      </pattern>
      <pattern id="major" x="13" y="5" width="64.550" height="64.550" patternUnits="userSpaceOnUse">
        <path d="M.5 0V65M0 .5H65" stroke="#303a41" fill="none" />
      </pattern>
    </defs>
    <rect width="100%" height="100%" fill="url(#minor)" />
    <rect width="100%" height="100%" fill="url(#major)" />
    <g transform="translate(0 -201)">
      <path d="M390.500 391V365.500h78V391" fill="#21273a" stroke="#7d80c4" strokeWidth="1.200" />
      <path d="M364.500 517V452.500h129V517" fill="none" stroke="#21a32b" strokeWidth="1.200" />
      <Column x={117} w={10} sides={[1]} />
      <Column x={333} w={12} sides={[-1, 1]} />
      <Column x={512} w={10.500} sides={[-1]} />
      <path d="M328 294.500h22" stroke="#eee" strokeWidth="2" />
      <Beam y={391.500} />
      <Beam y={517.500} />
      <Hanger x={121.500} />
      <Hanger x={339} />
      <Hanger x={517} />
      <Pipe x={152.500} y={377} r={14} base={391} inner={5} />
      <Pipe x={219.500} y={377} r={14} base={391} inner={5} />
      <Pipe x={285.500} y={371} r={20} base={391} inner={2} />
      <Pipe x={152.500} y={503} r={14} base={517} />
      <Pipe x={219.500} y={503} r={14} base={517} />
      <SideFrame />
      <path d="M-2 577l11 12M9 577l-11 12" stroke="#ddd" />
      <path d="M672 453v16l3.500-3 2.500 6 3-1-2.500-6h4.500z" fill="#fff" stroke="#222" strokeWidth=".8" />
    </g>
  </svg>
);

/* ---------- command area, layout tabs, status bar ---------- */

const History = styled.div`
  height: 52px;
  padding-top: 4px;
  border-top: 3px solid #e8f1f5;
  background: #c5c7c5;
  color: #1c1c1c;
  font-family: "DejaVu Sans Mono", "Noto Sans CJK SC", monospace;
`;
const HistoryLine = styled.p`
  display: flex;
  margin: 0;
  font-size: 12px;
  line-height: ${(p) => p.$h || 13}px;
  white-space: pre;
  margin-left: ${(p) => p.$shift}px;
`;
const Hanzi = styled.span`
  font-size: 13px;
`;
const CommandInput = styled.input`
  display: block;
  width: 100%;
  height: 24px;
  padding: 0 1px;
  border: solid #777;
  border-width: 1px 0;
  border-radius: 0;
  background: #fff;
  &::placeholder { color: #999; font-style: italic; opacity: 1; }
`;
const LayoutTabs = styled(FileTabs)`
  height: 20px;
  align-items: flex-start;
  background: #aeaeae;
`;
const StatusBar = styled.footer`
  display: flex;
  align-items: center;
  height: 28px;
  background: #ebebeb;
  white-space: nowrap;
  overflow: hidden;
  color: #222;
`;
const Sliver = styled.span`
  flex: none;
  width: 44px;
  margin-left: -9px;
  margin-right: 9px;
`;
const Coordinates = styled.span`
  flex: none;
  width: 182px;
  color: #777;
  font-family: Roboto, sans-serif;
`;
const ModelButton = styled.button`
  ${bare}
  flex: none;
  width: 25px;
  color: #111;
  font-weight: 500;
`;
const StatusButton = styled.button`
  ${bare}
  display: grid;
  place-items: center;
  flex: none;
  width: ${(p) => p.$w || 20}px;
  height: 24px;
  margin-left: ${(p) => p.$gap}px;
`;
const ScaleButton = styled.button`
  ${bare}
  flex: none;
  width: 54px;
  margin-left: 4px;
  color: #111;
  font-family: Roboto, sans-serif;
  text-align: left;
`;
const UnitField = styled.label`
  position: relative;
  display: flex;
  align-items: center;
  width: 66px;
  margin-left: 8px;
  & > i { position: absolute; right: 0; pointer-events: none; }
`;

const tabs = ["插入", "注释", "参数化", "视图", "管理", "输出", "附加模块", "A360", "精选应用", "BIM 360", "Performance"];

const strip = [
  ["edit", "delCol", "moveCol"], ["quad", "swap"], ["check"], ["tee"], ["pendulum", "goal", "railDown"],
  ["bay2", "bay3"], ["bolt", "railSide", "braceDown", "diagonal"], ["assembly"], ["target", "plate", "curvePlate"],
  ["hand", "boltWidth", "elbow", "boxes", "joinRails"], ["c72", "eraser"], ["grid", "gridEdit", "excel"],
  ["balance", "force"], ["beam", "calc"],
];

const statusLeft = [
  ["gridOn"], ["dots"], ["caret"], ["infer"], ["dynInput"], ["ortho", 8], ["polar", 0], ["caret"], ["isodraft", 0],
  ["caret"], ["otrack"], ["osnap"], ["caret"], ["lwt"], ["transparency"], ["cycling"], ["cube"], ["caret"],
  ["ducs"], ["filter"], ["caret"], ["gizmo"], ["caret"], ["annoVis"], ["annoAuto"], ["annoScale"],
];

const StatusItem = ({ name, gap = 4 }) =>
  name === "caret" ? (
    <StatusButton type="button" $w={18} $gap={0} aria-label="更多"><Caret $big /></StatusButton>
  ) : (
    <StatusButton type="button" $gap={gap} aria-label={name}><Icon name={name} /></StatusButton>
  );

const Bar = ({ name, w, right }) => (
  <BarButton type="button" $w={w} aria-label={name || "更多"}>
    {name ? <Icon name={name} /> : <Caret $w={12} $right={right} $big={right} />}
  </BarButton>
);

export default function App() {
  return (
    <Page>
      <Global />
      <TitleBar>
        <QuickAccess>
          <Bar name="save" /><Bar name="saveAs" /><Bar name="print" /><Bar name="undo" /><Bar w={12} />
          <Bar name="redo" /><Bar w={12} /><Bar name="customize" w={16} />
        </QuickAccess>
        <Caption><span>Autodesk AutoCAD 2016</span><span>大样图练习.dwg</span></Caption>
        <InfoCenter>
          <Bar w={12} right />
          <SearchInput type="search" aria-label="搜索" placeholder="键入关键字或短语" />
          <Bar name="binoculars" /><Bar name="user" />
          <SignIn type="button">登录<Caret $w={12} /></SignIn>
          <Bar name="exchange" w={28} /><Bar name="a360" w={20} /><Bar w={12} />
          <Divider />
          <Bar name="help" /><Bar w={12} />
        </InfoCenter>
        <WindowControls><Bar name="minimize" /></WindowControls>
      </TitleBar>

      <TabList>
        {tabs.map((t) => <Tab key={t} href="#">{t}</Tab>)}
        <CollapseButton type="button" aria-label="最小化"><CollapsePill /><Caret $w={12} /></CollapseButton>
      </TabList>

      <Ribbon>
        <Panel $w={113}>
          <PanelBody>
            <Big icon="circle" lines={["圆"]} caret w={36} clipped />
            <Big icon="arc" lines={["圆弧"]} caret w={48} />
            <ToolGrid $spaced>
              <Small icon="rect" caret /><Small icon="ellipse" caret /><Small icon="hatch" caret />
            </ToolGrid>
          </PanelBody>
          <PanelTitle $start={0}>图<Caret $big /></PanelTitle>
        </Panel>
        <Panel $w={193}>
          <PanelBody $pad={7}>
            <ToolGrid $cols="59px 59px 41px auto">
              <Small icon="move" label="移动" /><Small icon="rotate" label="旋转" /><Small icon="trim" caret /><Small icon="erase" />
              <Small icon="copy" label="复制" /><Small icon="mirror" label="镜像" /><Small icon="fillet" caret /><Small icon="explode" />
              <Small icon="stretch" label="拉伸" /><Small icon="scale" label="缩放" /><Small icon="array" caret /><Small icon="offset" />
            </ToolGrid>
          </PanelBody>
          <PanelTitle>修改<Caret $big /></PanelTitle>
        </Panel>
        <Panel $w={126}>
          <PanelBody $pad={4}>
            <Big icon="text" lines={["文字"]} caret />
            <Big icon="dimension" lines={["标注"]} />
            <ToolGrid $spaced>
              <Small icon="linear" caret /><Small icon="leader" caret /><Small icon="table" />
            </ToolGrid>
          </PanelBody>
          <PanelTitle>注释<Caret $big /></PanelTitle>
        </Panel>
        <Panel $w={252}>
          <PanelBody>
            <Big icon="layers" lines={["图层", "特性"]} />
            <LayerColumn>
              <Field>
                <FieldIcons><Icon name="bulb" /><Icon name="sun" /><Icon name="unlock" /><Icon name="swatch" /></FieldIcons>
                <Select aria-label="图层" $pad={4}><option>支吊架断面图</option></Select>
                <Caret $w={12} $big />
              </Field>
              <ToolGrid $cols="repeat(5, 24px)">
                {["layOff", "layIso", "layFreeze", "layLock", "layCurrent", "layOn", "layUniso", "layThaw", "layUnlock", "layMatch"].map((n) => (
                  <Small key={n} icon={n} wide />
                ))}
              </ToolGrid>
            </LayerColumn>
          </PanelBody>
          <PanelTitle>图层<Caret $big /></PanelTitle>
        </Panel>
        <Panel $w={80}>
          <PanelBody>
            <Big icon="insert" lines={["插入"]} caret />
            <ToolGrid $spaced>
              <Small icon="blockCreate" /><Small icon="blockEdit" /><Small icon="blockAttr" caret />
            </ToolGrid>
          </PanelBody>
          <PanelTitle>块<Caret $big /></PanelTitle>
        </Panel>
        <Panel $w={201}>
          <PanelBody>
            <Big icon="matchProps" lines={["特性", "匹配"]} />
            <ToolGrid>
              <Small icon="colors" /><Small icon="weights" /><Small icon="linetypes" />
            </ToolGrid>
            <FieldStack>
              <Field $pad={12}>
                <Icon name="grey" />
                <Select aria-label="颜色" $pad={11} $strong><option>ByLayer</option></Select>
                <Caret $w={12} $big />
              </Field>
              <Field $pad={7}>
                <LineSample />
                <Select aria-label="线宽"><option>ByLayer</option></Select>
                <Caret $w={12} $big />
              </Field>
              <Field $pad={7}>
                <LineSample />
                <Select aria-label="线型"><option>ByLayer</option></Select>
                <Caret $w={12} $big />
              </Field>
            </FieldStack>
          </PanelBody>
          <PanelTitle>
            <Spring />特性<Caret $big /><Spring />
            <Svg width="10" height="10" viewBox="0 0 10 10"><path d="M2 3l4 4M7 3v5H2" fill="none" stroke="#444" strokeWidth="1.300" /></Svg>
          </PanelTitle>
        </Panel>
        <Panel $w={68}>
          <PanelBody>
            <Big icon="group" lines={["组"]} />
            <ToolGrid>
              <Small icon="ungroup" wide /><Small icon="groupEdit" wide /><Small icon="groupSelect" wide active />
            </ToolGrid>
          </PanelBody>
          <PanelTitle>组<Caret $big /></PanelTitle>
        </Panel>
        <Panel $w={75}>
          <PanelBody>
            <Big icon="measure" lines={["测量"]} caret w={50} />
            <ToolGrid>
              <Small icon="quickSelect" /><Small icon="idPoint" /><Small icon="calculator" />
            </ToolGrid>
          </PanelBody>
          <PanelTitle>实用工具<Caret $big /></PanelTitle>
        </Panel>
        <Panel>
          <PanelBody>
            <Big icon="paste" lines={["粘贴"]} caret w={52} />
            <ToolGrid><Small icon="cut" /><Small icon="copyClip" /></ToolGrid>
          </PanelBody>
          <PanelTitle $start={19}>剪贴板</PanelTitle>
        </Panel>
      </Ribbon>

      <FileTabs>
        <FileTab $w={56} $gap={-10} $bg="#cfcfcf" $skew={18} />
        <FileTab $w={126} $pad={10} $skew={18} $tight>
          <TabLink href="#">大样图练习*</TabLink>
          <CloseButton type="button" aria-label="关闭">×</CloseButton>
        </FileTab>
        <FileTab $w={28} $h={15} $bg="#d9d9d9" $lift={2} $skew={18}><AddButton type="button">+</AddButton></FileTab>
      </FileTabs>

      <StripHolder>
        <Strip>
          {strip.map((group, i) => (
            <React.Fragment key={i}>
              {i > 0 && <StripRule />}
              {group.map((n) => <StripButton key={n} type="button" aria-label={n}><Icon name={n} /></StripButton>)}
            </React.Fragment>
          ))}
        </Strip>
      </StripHolder>

      <Canvas>
        <Drawing />
        <ViewLabel>维线框]</ViewLabel>
      </Canvas>

      <History>
        <HistoryLine $shift={-7}>it</HistoryLine>
        <HistoryLine $shift={-1}>*</HistoryLine>
        <HistoryLine $h={20} $shift={-9}>
          <Hanzi>对角点或</Hanzi>{" ["}<Hanzi>栏选</Hanzi>(F)/<Hanzi>圈围</Hanzi>(WP)/<Hanzi>圈交</Hanzi>(CP)]:
        </HistoryLine>
      </History>
      <CommandInput aria-label="命令" placeholder="令" />

      <LayoutTabs>
        <FileTab $w={24} $gap={-8} $h={17} $bg="#d4d4d4" $skew={12} />
        <FileTab $w={52} $h={18} $pad={9} $bg="#dadada" $skew={-12} $tight><TabLink href="#" $dim>布局2</TabLink></FileTab>
        <FileTab $w={30} $h={16} $bg="#e2e2e2" $skew={-12}><AddButton type="button">+</AddButton></FileTab>
      </LayoutTabs>

      <StatusBar>
        <Sliver>件</Sliver>
        <Coordinates>41363.5857, 11429.9811, 0.0000</Coordinates>
        <ModelButton type="button">模型</ModelButton>
        {statusLeft.map(([n, g], i) => <StatusItem key={i} name={n} gap={g} />)}
        <ScaleButton type="button">1:1 / 100%</ScaleButton>
        <StatusItem name="caret" />
        <StatusItem name="gear" />
        <StatusItem name="caret" />
        <StatusItem name="plus" gap={0} />
        <StatusItem name="ruler" gap={8} />
        <UnitField>
          <Select aria-label="单位" $strong><option>小数</option></Select>
          <Caret $w={14} $big />
        </UnitField>
        <StatusItem name="panel" />
        <StatusItem name="lockUi" gap={8} />
        <StatusItem name="caret" />
        <StatusItem name="isolate" gap={0} />
      </StatusBar>
    </Page>
  );
}
